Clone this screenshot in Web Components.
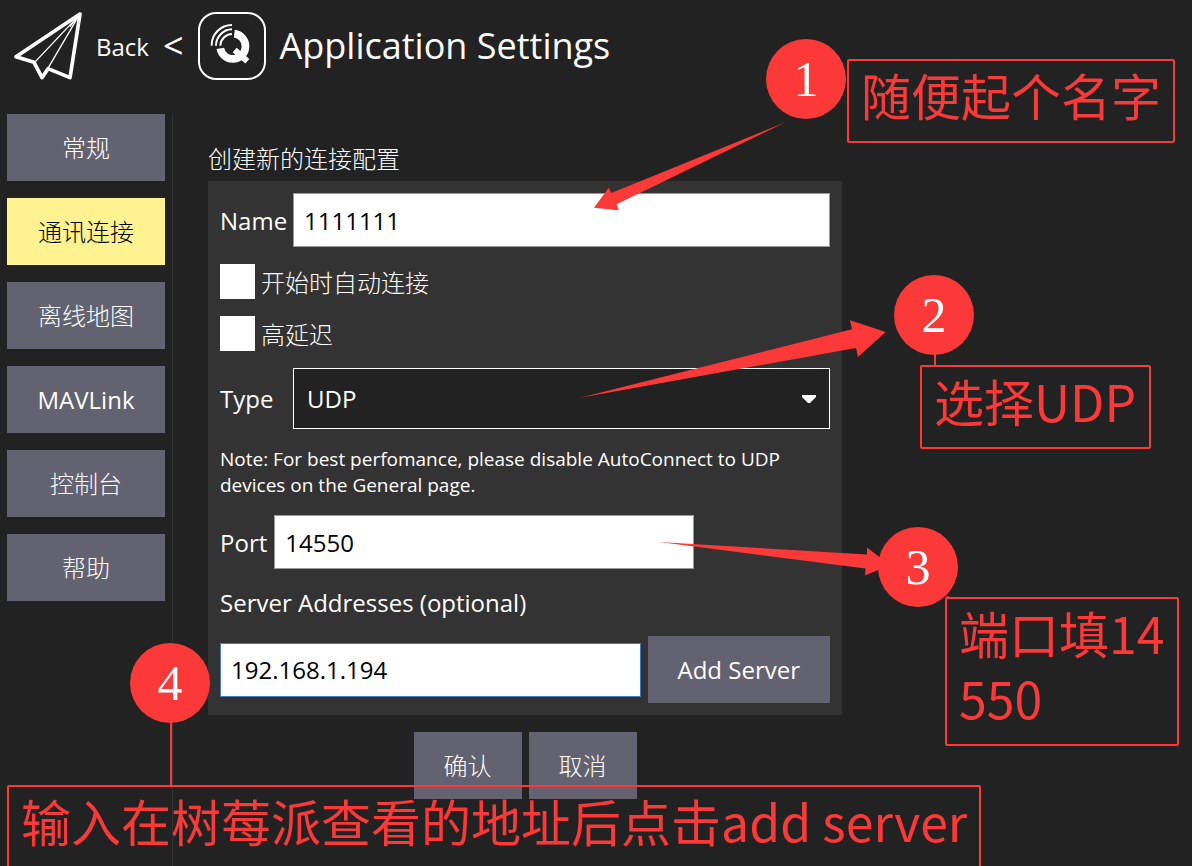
<!DOCTYPE html>
<html lang="zh">
<head>
<meta charset="utf-8">
<meta name="viewport" content="width=device-width, initial-scale=1">
<title>Application Settings</title>
<style>
    html, body{
        margin: 0;
        height: 100%;
    }
    body{
        background: #222;
        color: #fff;
        font-family: "Open Sans", "Noto Sans CJK SC", sans-serif;
        font-size: 24px;
        overflow: hidden;
    }
</style>
</head>
<body>

<settings-page>
    <settings-header slot="header" heading="Application Settings"></settings-header>

    <nav-button slot="nav">常规</nav-button>
    <nav-button slot="nav" active>通讯连接</nav-button>
    <nav-button slot="nav">离线地图</nav-button>
    <nav-button slot="nav">MAVLink</nav-button>
    <nav-button slot="nav">控制台</nav-button>
    <nav-button slot="nav">帮助</nav-button>

    <link-form></link-form>

    <note-arrows slot="notes"></note-arrows>
    <note-box slot="notes" style="--x:847px; --y:59px; --w:328px">随便起个名字</note-box>
    <note-box slot="notes" style="--x:920px; --y:365px; --w:231px">选择UDP</note-box>
    <note-box slot="notes" style="--x:945px; --y:597px; --w:234px">端口填14550</note-box>
    <note-box slot="notes" style="--x:7px; --y:785px; --w:974px">输入在树莓派查看的地址后点击add server</note-box>
    <note-pin slot="notes" style="--x:766px; --y:39px">1</note-pin>
    <note-pin slot="notes" style="--x:894px; --y:275px">2</note-pin>
    <note-pin slot="notes" style="--x:878px; --y:527px">3</note-pin>
    <note-pin slot="notes" style="--x:130px; --y:643px">4</note-pin>
</settings-page>

<script>
function makeTemplate(html){
    const template = document.createElement('template');
    template.innerHTML = html;
    return template;
}

function attach(element, template){
    element.attachShadow({mode: 'open'}).appendChild(
        template.content.cloneNode(true)
    );
}


const settingsPageTemplate = makeTemplate(`
    <style>
    :host{
        display: flex;
        flex-direction: column;
        position: relative;
        min-height: 100vh;
    }
    .main{
        display: flex;
        flex: 1;
    }
    nav{
        display: flex;
        flex-direction: column;
        gap: 17px;
        flex: 0 0 158px;
        padding: 0 7px;
        border-right: 1px solid #333;
    }
    main{
        flex: 1;
        padding: 27px 35px 0;
    }
    </style>

    <slot name="header"></slot>
    <div class="main">
        <nav><slot name="nav"></slot></nav>
        <main><slot></slot></main>
    </div>
    <slot name="notes"></slot>
`);

customElements.define('settings-page',
  class extends HTMLElement {
    constructor() {
      super();
      attach(this, settingsPageTemplate);
    }
  }
);


const settingsHeaderTemplate = makeTemplate(`
    <style>
    :host{
        display: block;
        padding: 12px 14px 34px;
    }
    header{
        display: flex;
        align-items: center;
        gap: 14px;
    }
    a{
        display: flex;
        align-items: center;
        gap: 14px;
        color: inherit;
        text-decoration: none;
    }
    svg{
        display: block;
        width: 68px;
        height: 68px;
        fill: none;
        stroke: #fff;
    }
    h1, .sep{
        margin: 0;
        font-size: 36px;
        font-weight: 400;
        line-height: 68px;
    }
    </style>

    <header>
        <a href="#">
            <svg viewBox="12 12 204 204" aria-hidden="true">
                <path stroke-width="11" stroke-linejoin="round" d="M210 18L18 146L72 163L96 209L114 182L180 209Z"/>
                <path stroke-width="4" d="M207 22L74 163M207 22L112 184M200 28L180 56"/>
            </svg>
            <span>Back</span>
        </a>
        <span class="sep">&lt;</span>
        <svg viewBox="12 12 204 204" aria-hidden="true">
            <rect x="15" y="15" width="198" height="198" rx="52" stroke-width="6"/>
            <path stroke-width="23" d="M121 77A38 38 0 1 1 79 121"/>
            <path stroke-width="18" d="M122 126L160 160"/>
            <path stroke-width="6" d="M53 113A61 61 0 0 1 114 51M66 113A49 49 0 0 1 114 64M79 113A36 36 0 0 1 114 78"/>
        </svg>
        <h1></h1>
    </header>
`);

customElements.define('settings-header',
  class extends HTMLElement {
    constructor() {
      super();
      attach(this, settingsHeaderTemplate);
      this.shadowRoot.querySelector('h1').textContent = this.getAttribute('heading');
    }
  }
);


const navButtonTemplate = makeTemplate(`
    <style>
    :host{
        display: block;
        --button-bg: #626270;
        --button-color: #fff;
    }
    :host([active]){
        --button-bg: #fff291;
        --button-color: #000;
    }
    button{
        display: block;
        width: 100%;
        height: 67px;
        padding: 0 30px 2px;
        border: 0;
        background: var(--button-bg);
        color: var(--button-color);
        font: inherit;
        font-weight: 300;
        white-space: nowrap;
    }
    :host([latin]) button{
        padding-bottom: 0;
        font-weight: 400;
    }
    </style>

    <button type="button"><slot></slot></button>
`);

// same flat button is used in the side bar and in the form
class FlatButton extends HTMLElement {
    constructor() {
      super();
      attach(this, navButtonTemplate);
      if(/^[\w ]+$/.test(this.textContent))
          this.setAttribute('latin', '');
    }
}

customElements.define('nav-button', FlatButton);
customElements.define('form-button', class extends FlatButton {});


const linkFormTemplate = makeTemplate(`
    <style>
    :host{
        display: block;
        max-width: 634px;
    }
    h2{
        margin: 0 0 4px;
        font-size: 24px;
        font-weight: 300;
        line-height: 36px;
    }
    .panel{
        display: flex;
        flex-direction: column;
        gap: 17px;
        padding: 12px;
        background: #333;
    }
    .row{
        display: flex;
        align-items: center;
        gap: 7px;
    }
    .row > .key{
        flex: 0 0 66px;
        min-width: 0;
    }
    .grow{
        flex: 1;
        min-width: 0;
    }
    input[type=text]{
        box-sizing: border-box;
        width: 420px;
        height: 54px;
        padding: 0 10px;
        border: 1px solid #999;
        border-radius: 0;
        background: #fff;
        color: #000;
        font: inherit;
        outline: 0;
    }
    input.grow{
        width: auto;
    }
    input.current{
        border-color: #4479b8;
    }
    .check{
        display: flex;
        align-items: center;
        gap: 6px;
        height: 35px;
        font-weight: 300;
    }
    input[type=checkbox]{
        appearance: none;
        width: 35px;
        height: 35px;
        margin: 0;
        background: #fff;
    }
    .select{
        display: grid;
        align-items: center;
    }
    .select > *{
        grid-area: 1 / 1;
    }
    select{
        appearance: none;
        width: 100%;
        height: 61px;
        padding: 0 13px;
        border: 1px solid #fff;
        border-radius: 0;
        background: #222;
        color: #fff;
        font: inherit;
    }
    .select svg{
        justify-self: end;
        width: 14px;
        height: 8px;
        margin-right: 14px;
        fill: #fff;
        pointer-events: none;
    }
    p{
        margin: 0;
        font-size: 19px;
        line-height: 26px;
    }
    .title{
        line-height: 33px;
    }
    .actions{
        display: flex;
        justify-content: center;
        gap: 7px;
        margin-top: 17px;
    }
    </style>

    <h2>创建新的连接配置</h2>
    <div class="panel">
        <div class="row">
            <label class="key" for="name">Name</label>
            <input class="grow" id="name" type="text" value="1111111">
        </div>
        <label class="check"><input type="checkbox">开始时自动连接</label>
        <label class="check"><input type="checkbox">高延迟</label>
        <div class="row">
            <label class="key" for="type">Type</label>
            <div class="select grow">
                <select id="type"><option>UDP</option></select>
                <svg viewBox="0 0 14 8" aria-hidden="true"><path d="M0 0H14V2L8 8H6L0 2Z"/></svg>
            </div>
        </div>
        <p>Note: For best perfomance, please disable AutoConnect to UDP devices on the General page.</p>
        <div class="row">
            <label for="port">Port</label>
            <input id="port" type="text" value="14550">
        </div>
        <label class="title" for="server">Server Addresses (optional)</label>
        <div class="row">
            <input class="grow current" id="server" type="text" value="192.168.1.194">
            <form-button>Add Server</form-button>
        </div>
    </div>
    <div class="actions">
        <form-button>确认</form-button>
        <form-button>取消</form-button>
    </div>
`);

customElements.define('link-form',
  class extends HTMLElement {
    constructor() {
      super();
      attach(this, linkFormTemplate);
    }
  }
);


// notes drawn over the page

const noteBoxTemplate = makeTemplate(`
    <style>
    :host{
        position: absolute;
        left: var(--x);
        top: var(--y);
        box-sizing: border-box;
        width: var(--w);
        padding: 1px 8px 14px 12px;
        border: 2px solid #fc3939;
        border-radius: 2px;
        color: #fc3939;
        font-family: "Noto Sans CJK SC", sans-serif;
        font-size: 50px;
        line-height: 65px;
        word-break: break-all;
    }
    </style>

    <slot></slot>
`);

customElements.define('note-box',
  class extends HTMLElement {
    constructor() {
      super();
      attach(this, noteBoxTemplate);
    }
  }
);


const notePinTemplate = makeTemplate(`
    <style>
    :host{
        position: absolute;
        left: var(--x);
        top: var(--y);
        width: 80px;
        height: 80px;
        border-radius: 50%;
        background: #fc3939;
        color: #fff;
        font-family: "Liberation Serif", serif;
        font-size: 50px;
        line-height: 80px;
        text-align: center;
    }
    </style>

    <slot></slot>
`);

customElements.define('note-pin',
  class extends HTMLElement {
    constructor() {
      super();
      attach(this, notePinTemplate);
    }
  }
);


const noteArrowsTemplate = makeTemplate(`
    <style>
    :host{
        position: absolute;
        left: 0;
        top: 0;
        pointer-events: none;
    }
    svg{
        display: block;
        fill: #fc3939;
    }
    </style>

    <svg width="1192" height="866" aria-hidden="true">
        <path d="M786 122L611.3 193L608.7 187.7L594 207.7L618.7 210.3L616.7 204.3Z"/>
        <path d="M580 397.7L852 329.3L850 320.3L885.7 332L858 357L856 348Z"/>
        <path d="M659 542L867 554.5V547.5L890 565L865 575.5L865.5 568.5Z"/>
        <path d="M934 350h2v16h-2zM170 720h2v66h-2zM946 596l14 3h-14z"/>
    </svg>
`);

customElements.define('note-arrows',
  class extends HTMLElement {
    constructor() {
      super();
      attach(this, noteArrowsTemplate);
    }
  }
);
</script>
</body>
</html>
